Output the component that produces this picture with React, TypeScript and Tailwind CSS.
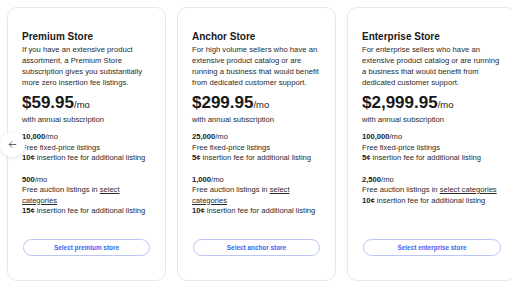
const plans = [
  {
    name: "Premium Store",
    desc: "If you have an extensive product assortment, a Premium Store subscription gives you substantially more zero insertion fee listings.",
    price: "$59.95",
    fixed: "10,000",
    fixedFee: "10¢",
    auction: "500",
    auctionFee: "15¢",
    button: "Select premium store",
    width: "w-[159px]",
  },
  {
    name: "Anchor Store",
    desc: "For high volume sellers who have an extensive product catalog or are running a business that would benefit from dedicated customer support.",
    price: "$299.95",
    fixed: "25,000",
    fixedFee: "5¢",
    auction: "1,000",
    auctionFee: "10¢",
    button: "Select anchor store",
    width: "w-[159px]",
  },
  {
    name: "Enterprise Store",
    desc: "For enterprise sellers who have an extensive product catalog or are running a business that would benefit from dedicated customer support.",
    price: "$2,999.95",
    fixed: "100,000",
    fixedFee: "5¢",
    auction: "2,500",
    auctionFee: "10¢",
    button: "Select enterprise store",
    width: "w-[170px]",
  },
];

export default function App() {
  return (
    <div
      className="relative w-[512px] h-[285px] overflow-hidden bg-white text-[#191919]"
      style={{ fontFamily: "'Liberation Sans', Arial, sans-serif" }}
    >
      <div className="flex gap-[11px] pl-[7px] pt-[7px]">
        {plans.map((p) => (
          <div
            key={p.name}
            className={`${p.width} h-[274px] shrink-0 rounded-[10px] border border-[#e8e8e8] px-[14px] pt-[22px] flex flex-col`}
          >
            <h3 className="text-[10px] leading-[14px] font-bold">{p.name}</h3>
            <p className="text-[7.7px] leading-[11px] text-[#2a2a2a]">{p.desc}</p>
            <div className="mt-[5px] leading-[19px]">
              <span className="text-[17px] font-bold">{p.price}</span>
              <span className="text-[9.5px]">/mo</span>
            </div>
            <p className="text-[7.7px] leading-[11px] text-[#2a2a2a]">with annual subscription</p>

            <div className="mt-[7px] text-[7.6px] leading-[10.5px] text-[#2a2a2a]">
              <p>
                <span className="font-bold text-[#191919]">{p.fixed}</span>/mo
              </p>
              <p>Free fixed-price listings</p>
              <p className="whitespace-nowrap">
                <span className="font-bold text-[#191919]">{p.fixedFee}</span> insertion fee for additional listing
              </p>
              <p className="mt-[11px]">
                <span className="font-bold text-[#191919]">{p.auction}</span>/mo
              </p>
              <p>
                Free auction listings in <span className="underline">select categories</span>
              </p>
              <p className="whitespace-nowrap">
                <span className="font-bold text-[#191919]">{p.auctionFee}</span> insertion fee for additional listing
              </p>
            </div>

            <div className="mt-auto mb-[23px] px-[1px]">
              <button
                type="button"
                className="w-full h-[17px] rounded-full border border-[#bcc6f3] text-[6.4px] font-bold text-[#3665f3]"
              >
                {p.button}
              </button>
            </div>
          </div>
        ))}
      </div>

      <button
        type="button"
        className="absolute left-[0px] top-[132px] w-[25px] h-[25px] rounded-full bg-white shadow-[0_1px_4px_rgba(0,0,0,0.12)] flex items-center justify-center text-[#555]"
      >
        <svg width="9" height="9" viewBox="0 0 12 12" fill="none" stroke="currentColor" strokeWidth="1.2">
          <path d="M11 6H1.5M5.5 2L1.5 6l4 4" />
        </svg>
      </button>
    </div>
  );
}
